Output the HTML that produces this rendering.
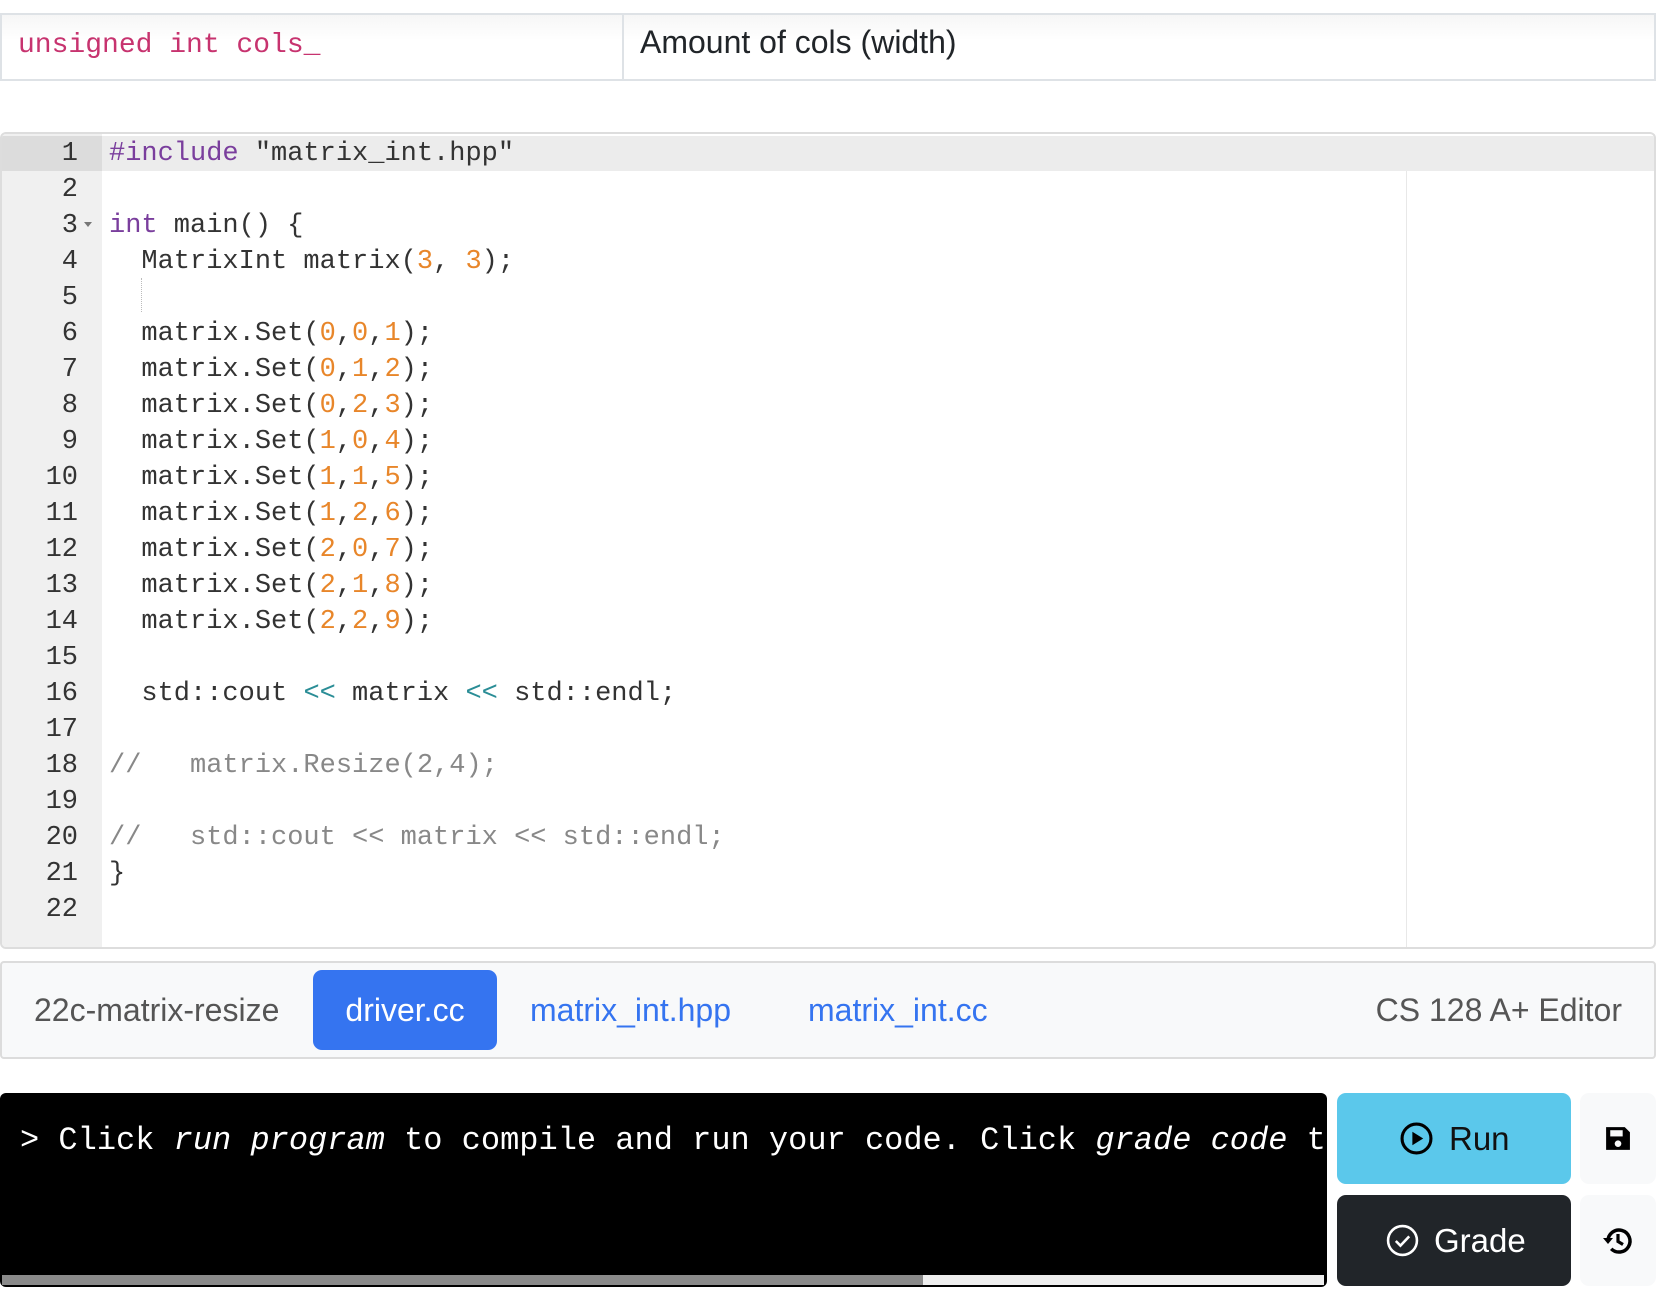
<!DOCTYPE html>
<html><head><meta charset="utf-8"><style>
*{box-sizing:border-box;margin:0;padding:0}
body{width:1656px;height:1290px;background:#fff;position:relative;overflow:hidden;font-family:"Liberation Sans",sans-serif}
.abs{position:absolute}
.mono{font-family:"Liberation Mono",monospace}
.code{position:absolute;left:107px;font-size:27px;white-space:pre;color:#333;height:36px;line-height:36px}
.ln{position:absolute;left:0;width:76px;text-align:right;font-size:27px;line-height:36px;color:#333;font-family:"Liberation Mono",monospace}
.k{color:#7a3e9d}.n{color:#e8862a}.o{color:#2a8d96}.c{color:#888}
.tab{position:absolute;top:970px;height:80px;line-height:80px;font-size:32px}
</style></head><body>
<div class="abs" style="left:0;top:13px;width:1656px;height:68px;border:2px solid #dee2e6;background:linear-gradient(#f6f6f6,#fff 40%)"></div>
<div class="abs" style="left:622px;top:13px;width:2px;height:68px;background:#dee2e6"></div>
<div class="abs mono" style="left:18px;top:26px;font-size:28px;line-height:40px;color:#c7336f">unsigned int cols_</div>
<div class="abs" style="left:640px;top:22px;font-size:32px;line-height:40px;color:#212529">Amount of cols (width)</div>

<div class="abs" style="left:0;top:132px;width:1656px;height:817px;border:2px solid #ddd;border-radius:6px;overflow:hidden;background:#fff">
  <div class="abs" style="left:0;top:0;width:100px;height:817px;background:#f0f0f0"></div>
  <div class="abs" style="left:0;top:2px;width:100px;height:35px;background:#dcdcdc"></div>
  <div class="abs" style="left:100px;top:2px;width:1556px;height:35px;background:#ececec"></div>
  <div class="abs" style="left:1404px;top:37px;width:1px;height:780px;background:#e8e8e8"></div>
  <div class="abs" style="left:139px;top:144px;width:0;height:34px;border-left:1px dotted #bbb"></div>
  <div class="abs" style="left:0;top:2px;width:1656px">
  <div class="ln" style="top:0">1</div><div class="ln" style="top:36px">2</div><div class="ln" style="top:72px">3</div><div class="abs" style="left:82px;top:86px;border:4px solid transparent;border-top:5px solid #777"></div>
  <div class="ln" style="top:108px">4</div><div class="ln" style="top:144px">5</div><div class="ln" style="top:180px">6</div><div class="ln" style="top:216px">7</div><div class="ln" style="top:252px">8</div><div class="ln" style="top:288px">9</div><div class="ln" style="top:324px">10</div><div class="ln" style="top:360px">11</div><div class="ln" style="top:396px">12</div><div class="ln" style="top:432px">13</div><div class="ln" style="top:468px">14</div><div class="ln" style="top:504px">15</div><div class="ln" style="top:540px">16</div><div class="ln" style="top:576px">17</div><div class="ln" style="top:612px">18</div><div class="ln" style="top:648px">19</div><div class="ln" style="top:684px">20</div><div class="ln" style="top:720px">21</div><div class="ln" style="top:756px">22</div>
  <div class="code mono" style="top:0"><span class="k">#include</span> "matrix_int.hpp"</div>
  <div class="code mono" style="top:72px"><span class="k">int</span> main() {</div>
  <div class="code mono" style="top:108px">  MatrixInt matrix(<span class="n">3</span>, <span class="n">3</span>);</div>
  <div class="code mono" style="top:180px">  matrix.Set(<span class="n">0</span>,<span class="n">0</span>,<span class="n">1</span>);</div>
  <div class="code mono" style="top:216px">  matrix.Set(<span class="n">0</span>,<span class="n">1</span>,<span class="n">2</span>);</div>
  <div class="code mono" style="top:252px">  matrix.Set(<span class="n">0</span>,<span class="n">2</span>,<span class="n">3</span>);</div>
  <div class="code mono" style="top:288px">  matrix.Set(<span class="n">1</span>,<span class="n">0</span>,<span class="n">4</span>);</div>
  <div class="code mono" style="top:324px">  matrix.Set(<span class="n">1</span>,<span class="n">1</span>,<span class="n">5</span>);</div>
  <div class="code mono" style="top:360px">  matrix.Set(<span class="n">1</span>,<span class="n">2</span>,<span class="n">6</span>);</div>
  <div class="code mono" style="top:396px">  matrix.Set(<span class="n">2</span>,<span class="n">0</span>,<span class="n">7</span>);</div>
  <div class="code mono" style="top:432px">  matrix.Set(<span class="n">2</span>,<span class="n">1</span>,<span class="n">8</span>);</div>
  <div class="code mono" style="top:468px">  matrix.Set(<span class="n">2</span>,<span class="n">2</span>,<span class="n">9</span>);</div>
  <div class="code mono" style="top:540px">  std::cout <span class="o">&lt;&lt;</span> matrix <span class="o">&lt;&lt;</span> std::endl;</div>
  <div class="code mono c" style="top:612px">//   matrix.Resize(2,4);</div>
  <div class="code mono c" style="top:684px">//   std::cout &lt;&lt; matrix &lt;&lt; std::endl;</div>
  <div class="code mono" style="top:720px">}</div>
  </div>
</div>

<div class="abs" style="left:0;top:961px;width:1656px;height:98px;border:2px solid #dcdcdc;border-radius:4px;background:#f8f9fa"></div>
<div class="tab" style="left:34px;color:#555">22c-matrix-resize</div>
<div class="tab" style="left:313px;width:184px;background:#3574f0;border-radius:9px;color:#fff;text-align:center">driver.cc</div>
<div class="tab" style="left:530px;color:#3574f0">matrix_int.hpp</div>
<div class="tab" style="left:808px;color:#3574f0">matrix_int.cc</div>
<div class="tab" style="left:1370px;width:252px;text-align:right;color:#555">CS 128 A+ Editor</div>

<div class="abs" style="left:0;top:1093px;width:1327px;height:194px;background:#000;border-radius:6px;overflow:hidden">
  <div class="abs mono" style="left:20px;top:28px;font-size:32px;line-height:40px;color:#fff;white-space:pre">&gt; Click <i>run program</i> to compile and run your code. Click <i>grade code</i> to</div>
  <div class="abs" style="left:2px;top:182px;width:1322px;height:10px;background:#eee"></div>
  <div class="abs" style="left:2px;top:182px;width:921px;height:10px;background:#8a8a8a"></div>
</div>

<div class="abs" style="left:1337px;top:1093px;width:234px;height:91px;background:#5bc8eb;border-radius:9px;font-size:33px;line-height:91px;color:#111">
  <svg class="abs" style="left:63px;top:29px" width="33" height="33" viewBox="0 0 32 32"><circle cx="16" cy="16" r="14" fill="none" stroke="#000" stroke-width="3"/><path d="M12 9.5v13l10.5-6.5z" fill="#000"/></svg>
  <span class="abs" style="left:112px">Run</span></div>
<div class="abs" style="left:1337px;top:1195px;width:234px;height:91px;background:#212529;border-radius:9px;font-size:33px;line-height:91px;color:#fff">
  <svg class="abs" style="left:49px;top:29px" width="33" height="33" viewBox="0 0 32 32"><circle cx="16" cy="16" r="14" fill="none" stroke="#fff" stroke-width="2.5"/><path d="M9.5 16.5l4.5 4.5 8.5-9" fill="none" stroke="#fff" stroke-width="2.5"/></svg>
  <span class="abs" style="left:97px">Grade</span></div>
<div class="abs" style="left:1580px;top:1093px;width:76px;height:91px;background:#f8f9fa;border-radius:9px">
  <svg class="abs" style="left:23px;top:31px" width="29" height="29" viewBox="0 0 28 28"><path d="M3 3h18l5 5v17H3z" fill="#000"/><rect x="7" y="6" width="12" height="6" fill="#f8f9fa"/><circle cx="14.5" cy="19" r="3.2" fill="#f8f9fa"/></svg></div>
<div class="abs" style="left:1580px;top:1195px;width:76px;height:91px;background:#f8f9fa;border-radius:9px">
  <svg class="abs" style="left:22px;top:30px" width="32" height="32" viewBox="0 0 32 32"><path d="M6 16a11 11 0 1 1 3.2 7.8" fill="none" stroke="#000" stroke-width="3.5"/><path d="M1 13h10L6 19z" fill="#000"/><path d="M16 9v7.5l5 3" fill="none" stroke="#000" stroke-width="3.2"/></svg></div>
</body></html>
